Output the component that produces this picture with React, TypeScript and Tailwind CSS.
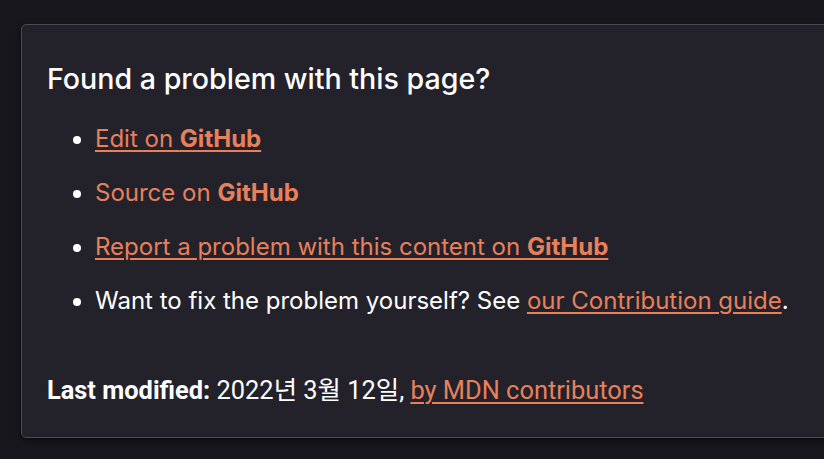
import React from 'react';

const linkCls = 'text-[#e8805c] underline underline-offset-[3px] decoration-[1.5px]';

export default function App() {
  return (
    <div className="min-h-[459px] w-[824px] overflow-hidden bg-[#18171e] pt-[24px] pl-[21px] font-['Inter',sans-serif] text-white">
      <section className="h-[414px] w-[830px] rounded-[5px] border border-[#4c4b55] bg-[#23222b] pl-[25px] pt-[36px] shadow-[0_2px_6px_rgba(0,0,0,0.6)]">
        <h2 className="text-[28.6px] leading-[36px] font-medium">Found a problem with this page?</h2>
        <ul className="mt-[26px] list-disc pl-[48px] text-[24px] leading-[32px] marker:text-white">
          <li className="pb-[22px]">
            <a className={linkCls} href="#">
              Edit on <b className="font-bold">GitHub</b>
            </a>
          </li>
          <li className="pb-[22px] text-[#e8805c]">
            Source on <b className="font-bold">GitHub</b>
          </li>
          <li className="pb-[22px]">
            <a className={linkCls} href="#">
              Report a problem with this content on <b className="font-bold">GitHub</b>
            </a>
          </li>
          <li>
            Want to fix the problem yourself? See{' '}
            <a className={linkCls} href="#">our Contribution guide</a>.
          </li>
        </ul>
        <p className="mt-[57px] font-['Roboto','Noto_Sans_CJK_KR',sans-serif] text-[25.4px] leading-[32px]">
          <b className="font-bold">Last modified:</b> 2022년 3월 12일,{' '}
          <a className={linkCls} href="#">by MDN contributors</a>
        </p>
      </section>
    </div>
  );
}
